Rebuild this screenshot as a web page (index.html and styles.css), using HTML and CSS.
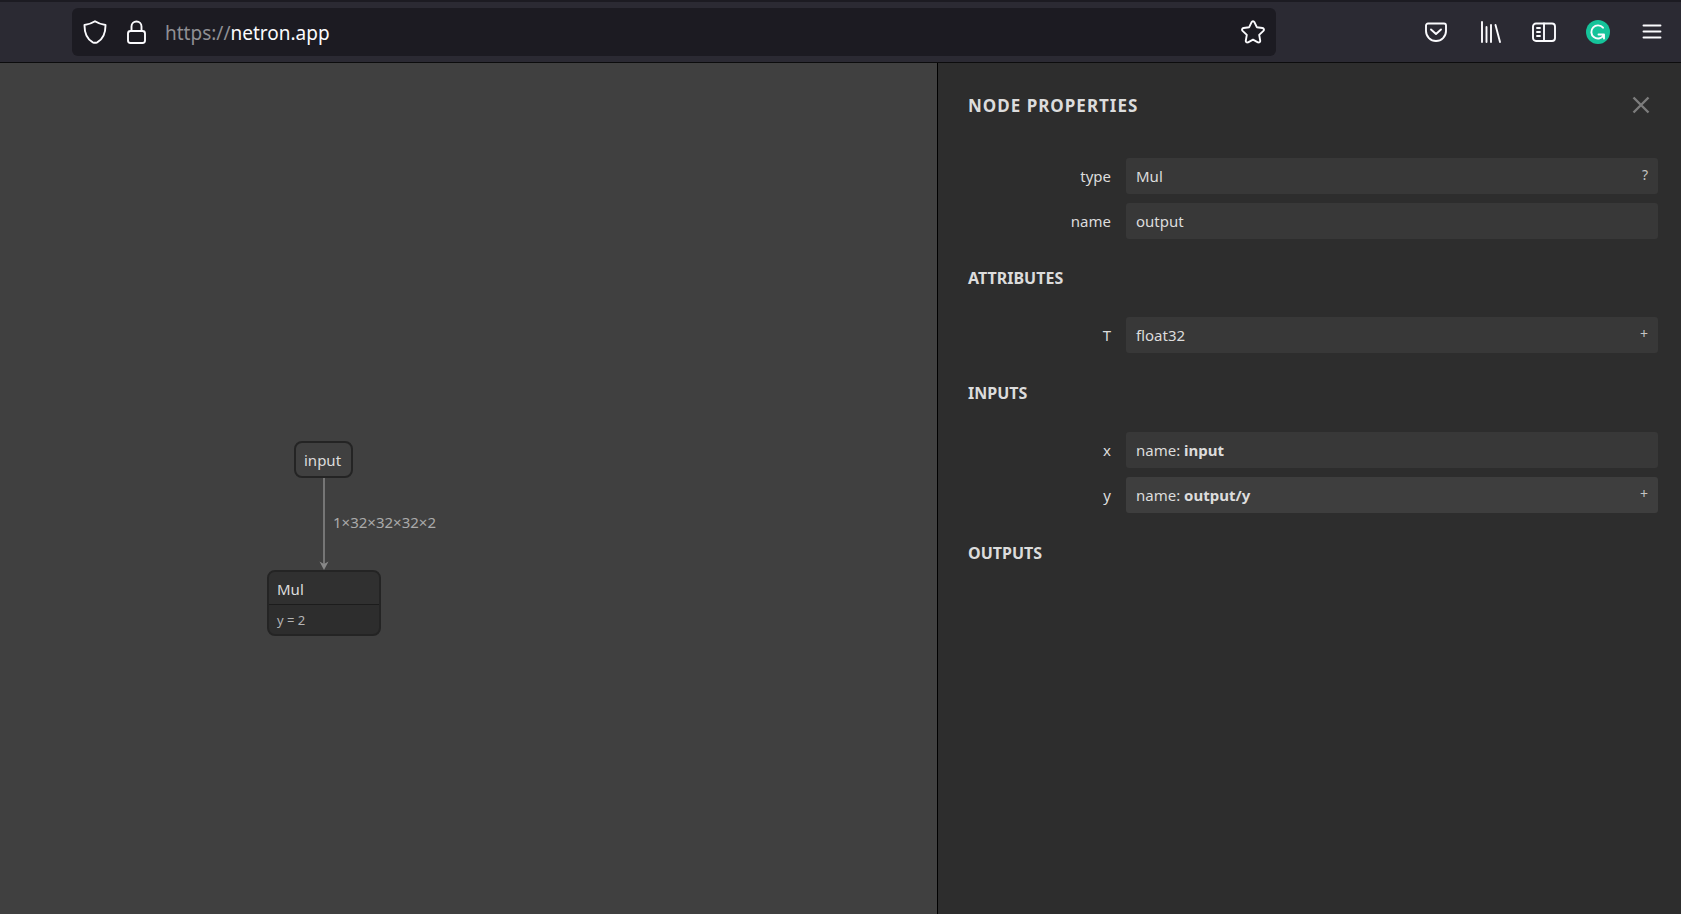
FILE: index.html
```html
<!DOCTYPE html>
<html lang="en">
<head>
<meta charset="utf-8">
<title>Netron</title>
<link rel="stylesheet" href="styles.css">
</head>
<body>
<header class="toolbar">
  <div class="urlbar">
    <button class="icon-button" aria-label="Tracking protection">
      <svg class="icon" viewBox="0 0 24 24"><path d="M12 1.200C9 3.200 5.400 4.400 1.500 5c-.1 7.500 2.600 14.300 8.300 17.300 1.500.7 2.900.7 4.400 0C19.900 19.300 22.600 12.500 22.500 5 18.600 4.400 15 3.200 12 1.200z"/></svg>
    </button>
    <button class="icon-button" aria-label="Site information">
      <svg class="icon" viewBox="0 0 24 24"><rect x="4" y="11" width="17" height="12" rx="2.500"/><path d="M7.500 11V6.500a5 5 0 0 1 10 0V11"/></svg>
    </button>
    <a class="address" href="#"><span class="scheme">https://</span>netron.app</a>
    <button class="icon-button" aria-label="Bookmark this page">
      <svg class="icon" viewBox="0 0 24 24"><path d="M10.600 2.200c.6-1.300 2.200-1.300 2.800 0l2.400 5 5.600.8c1.500.2 2 1.900 1 2.900l-4.200 4 1 5.700c.3 1.500-1.100 2.400-2.300 1.700L12 19.600l-4.900 2.700c-1.200.7-2.600-.2-2.300-1.700l1-5.700-4.200-4c-1-1-.5-2.700 1-2.900l5.600-.8z"/></svg>
    </button>
  </div>
  <nav class="tools" aria-label="Browser tools">
    <button class="icon-button" aria-label="Pocket">
      <svg class="icon" viewBox="0 0 24 24"><path d="M4 3.500h16a2 2 0 0 1 2 2V11a10 10 0 0 1-20 0V5.500a2 2 0 0 1 2-2zM7 9.500l5 4.500 5-4.500"/></svg>
    </button>
    <button class="icon-button" aria-label="Library">
      <svg class="icon" viewBox="0 0 24 24"><path d="M4 2v20M8.500 7v15M13 5v17M17.500 5l4.500 17"/></svg>
    </button>
    <button class="icon-button" aria-label="Sidebars">
      <svg class="icon" viewBox="0 0 24 24"><rect x="1" y="3.500" width="22" height="17.500" rx="3"/><path d="M12 3.500V21M5 8h3M5 12h3M5 16h3"/></svg>
    </button>
    <button class="icon-button" aria-label="Grammarly">
      <svg class="icon" viewBox="0 0 24 24"><circle class="badge" cx="12" cy="12" r="12"/><path d="M17 7.700A6.600 6.600 0 1 0 17.500 15.500M12.500 14.500h5.500v4"/></svg>
    </button>
    <button class="icon-button" aria-label="Menu">
      <svg class="icon" viewBox="0 0 24 24"><path d="M3.500 5.500h17M3.500 11.500h17M3.500 17.500h17"/></svg>
    </button>
  </nav>
</header>
<main class="workspace">
  <section class="graph" aria-label="Model graph">
    <svg class="edge" width="12" height="94" viewBox="0 0 12 94"><path class="edge-line" d="M6 0v91"/><path class="edge-head" d="M1.500 85.500l4.500 2.500 4.500-2.500L6 94z"/></svg>
    <span class="edge-label">1×32×32×32×2</span>
    <div class="node node-input">input</div>
    <div class="node node-mul">
      <div class="node-title">Mul</div>
      <div class="node-attribute">y = 2</div>
    </div>
  </section>
  <aside class="sidebar">
    <div class="sidebar-header">
      <h1 class="sidebar-title">NODE PROPERTIES</h1>
      <button class="close" aria-label="Close"><svg class="close-icon" viewBox="0 0 18 18"><path d="M1.500 1.500l15 15M16.500 1.500l-15 15"/></svg></button>
    </div>
    <dl class="properties">
      <dt class="name">type</dt>
      <dd class="value"><span>Mul</span><button class="expander" aria-label="Show documentation">?</button></dd>
      <dt class="name">name</dt>
      <dd class="value">output</dd>
    </dl>
    <h2 class="group">ATTRIBUTES</h2>
    <dl class="properties">
      <dt class="name">T</dt>
      <dd class="value"><span>float32</span><button class="expander" aria-label="Expand T">+</button></dd>
    </dl>
    <h2 class="group">INPUTS</h2>
    <dl class="properties">
      <dt class="name">x</dt>
      <dd class="value"><span>name: <b>input</b></span></dd>
      <dt class="name">y</dt>
      <dd class="value value-light"><span>name: <b>output/y</b></span><button class="expander" aria-label="Expand y">+</button></dd>
    </dl>
    <h2 class="group">OUTPUTS</h2>
  </aside>
</main>
</body>
</html>
```
FILE: styles.css
```css
* {
  box-sizing: border-box;
}

body {
  margin: 0;
  min-height: 100vh;
  display: flex;
  flex-direction: column;
  background: #404040;
  color: #dcdcdc;
  font-family: "Noto Sans", "Open Sans", sans-serif;
  font-size: 15px;
}

button {
  padding: 0;
  border: 0;
  background: none;
  color: inherit;
  font: inherit;
}

.toolbar {
  display: flex;
  align-items: center;
  justify-content: space-between;
  padding: 6px 17px 6px 72px;
  border-top: 2px solid #1c1b22;
  border-bottom: 1px solid #0c0c0d;
  background: #2b2a33;
}

.urlbar {
  flex: 0 1 1204px;
  display: flex;
  align-items: center;
  gap: 17px;
  height: 48px;
  padding: 0 11px;
  border-radius: 6px;
  background: #1c1b22;
}

.address {
  flex: 1;
  padding-top: 2px;
  color: #fbfbfe;
  font-size: 19px;
  line-height: 26px;
  text-decoration: none;
}

.scheme {
  color: #8f8f94;
}

.tools {
  display: flex;
  gap: 30px;
}

.icon-button {
  display: block;
  width: 24px;
  height: 24px;
}

.icon {
  display: block;
  width: 24px;
  height: 24px;
  fill: none;
  stroke: #fbfbfe;
  stroke-width: 1.9;
  stroke-linecap: round;
  stroke-linejoin: round;
}

.badge {
  fill: #15c39a;
  stroke: none;
}

.workspace {
  flex: 1;
  display: grid;
  grid-template-columns: 937fr 744fr;
}

.graph {
  position: relative;
}

.node {
  position: absolute;
  border: 2px solid #242424;
  border-radius: 8px;
  line-height: 20px;
}

.node-input {
  left: 294px;
  top: 378px;
  padding: 7px 10px 6px 8px;
}

.node-mul {
  left: 267px;
  top: 507px;
  width: 114px;
  background: #2d2d2d;
}

.node-title {
  padding: 7px 8px 5px;
  border-bottom: 1px solid #1c1c1c;
  border-radius: 6px 6px 0 0;
  background: #303030;
}

.node-attribute {
  padding: 5px 8px 4px;
  color: #b4b4b4;
  font-size: 13px;
}

.edge {
  position: absolute;
  left: 318px;
  top: 413px;
}

.edge-line {
  fill: none;
  stroke: #888888;
  stroke-width: 1.5;
}

.edge-head {
  fill: #888888;
}

.edge-label {
  position: absolute;
  left: 333px;
  top: 449px;
  color: #aaaaaa;
  line-height: 20px;
}

.sidebar {
  padding: 28px 23px 28px 30px;
  border-left: 1px solid #000000;
  background: #2d2d2d;
}

.sidebar-header {
  display: flex;
  align-items: center;
  justify-content: space-between;
  height: 28px;
  margin-bottom: 39px;
  padding-right: 8px;
}

.sidebar-title {
  margin: 0;
  font-size: 17px;
  letter-spacing: 1px;
}

.close {
  height: 20px;
}

.close-icon {
  display: block;
  width: 18px;
  height: 18px;
  fill: none;
  stroke: #7c7c7c;
  stroke-width: 2.4;
}

.properties {
  display: grid;
  grid-template-columns: 143px 1fr;
  gap: 9px 15px;
  margin: 0;
}

.name {
  text-align: right;
  line-height: 36px;
}

.value {
  display: flex;
  justify-content: space-between;
  margin: 0;
  padding: 0 10px;
  border-radius: 3px;
  background: #383838;
  line-height: 36px;
}

.value-light {
  background: #3e3e3e;
}

.expander {
  height: 34px;
  color: #c4c4c4;
  font-size: 14px;
  line-height: 32px;
}

.group {
  margin: 28px 0;
  font-size: 16px;
  line-height: 22px;
}

.group ~ .group {
  margin-top: 29px;
}
```
